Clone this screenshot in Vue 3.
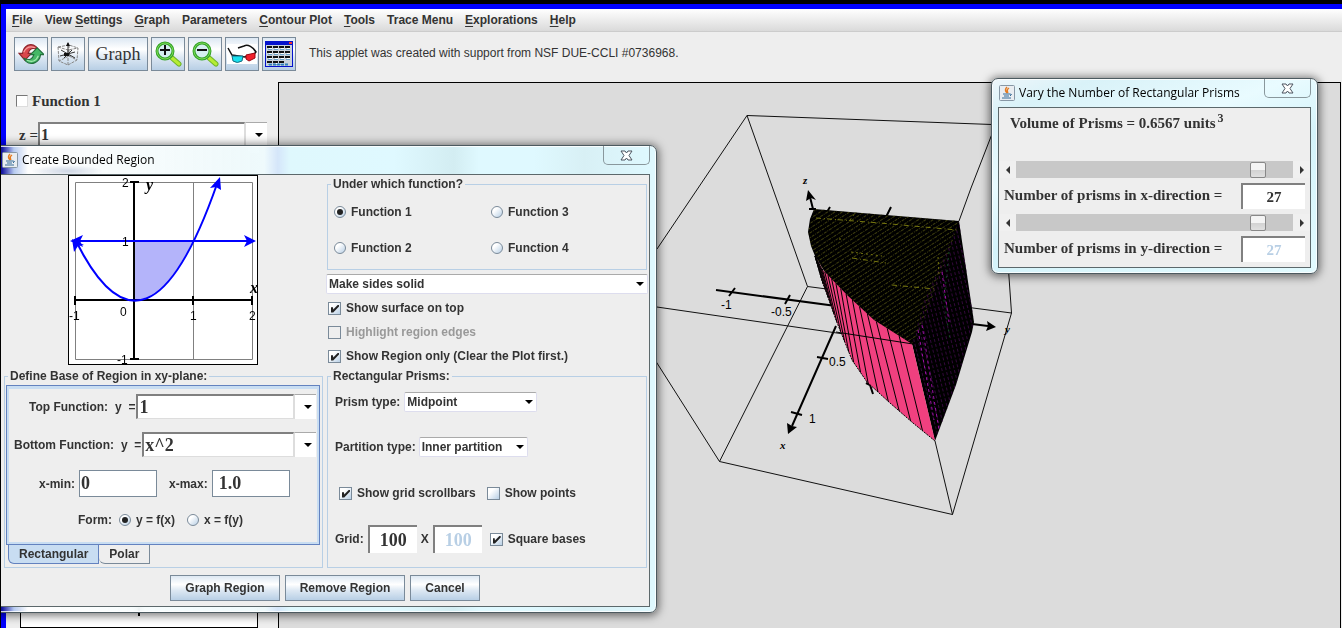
<script setup>
import { ref } from 'vue'

const menus = [
  ['', 'F', 'ile'], ['View ', 'S', 'ettings'], ['', 'G', 'raph'], ['Parameters', '', ''],
  ['', 'C', 'ontour Plot'], ['', 'T', 'ools'], ['Trace Menu', '', ''], ['', 'E', 'xplorations'], ['', 'H', 'elp'],
]

const under = ref('Function 1')
const form = ref('yx')
const nx = ref(27)
const ny = ref(27)

// Point at fraction f of a polyline's length
function along(points, f) {
  const lens = points.slice(1).map((p, i) => Math.hypot(p[0] - points[i][0], p[1] - points[i][1]))
  let d = f * lens.reduce((a, b) => a + b, 0)
  for (let i = 0; i < lens.length; i++) {
    if (d <= lens[i]) {
      const t = d / lens[i]
      return [points[i][0] + t * (points[i + 1][0] - points[i][0]), points[i][1] + t * (points[i + 1][1] - points[i][1])]
    }
    d -= lens[i]
  }
  return points[points.length - 1]
}
const upper = [[815, 256], [823, 270], [847, 295], [874, 320], [912, 344]]
const lower = [[815, 256], [822, 281], [829, 300], [836, 320], [852, 360], [867, 382], [890, 403], [913, 423], [935, 441]]
const edges = Array.from({ length: 25 }, (_, k) => {
  const a = along(upper, Math.pow(k / 25, 3))
  const b = along(lower, Math.pow(k / 25, 1.8))
  return { x1: a[0], y1: a[1], x2: b[0], y2: b[1] }
})
const face = [...upper, ...lower.slice().reverse()].map((p) => p.join(',')).join(' ')

const box = [
  'M992 124.500L747 115.500L657 249', 'M747 115.500L807.500 286.500L1011.500 313L1008.500 270', 'M807.500 286.500L719.500 461.500L952.500 514.500L1011.500 313',
  'M719.500 461.500L650 352', 'M650 306L719 316L913 344', 'M935 441L952.500 514.500', 'M959 221L971 188L992 134',
]
const keys = []
for (let r = 0; r < 4; r++) for (let c = 0; c < (r === 3 ? 3 : 4); c++) keys.push([4 + c * 6, 6 + r * 5])
</script>

<template>
  <div class="app">
    <nav class="menubar">
      <button v-for="m in menus" :key="m.join('')" class="menu">{{ m[0] }}<u>{{ m[1] }}</u>{{ m[2] }}</button>
    </nav>

    <div class="toolbar">
      <button class="btn tool" aria-label="Reset">
        <svg width="26" height="26" viewBox="2 2 23 23">
          <path d="M3 13H6C7 6 13 3 18 7L20 10C15 7 12 9 11 13H14L8 19Z" fill="#d9464c" stroke="#8d262c" />
          <path d="M7 12C9 8 12 6 17 8" fill="none" stroke="#f6a0a0" stroke-width="1" />
          <path d="M25 14H22C21 21 14 24 9 20L7 17C12 20 15 18 16 14H13L19 8Z" fill="#45b866" stroke="#236f3d" />
          <path d="M20 15C18 20 14 21 10 19" fill="none" stroke="#a5e9ac" stroke-width="1" />
        </svg>
      </button>
      <button class="btn tool" aria-label="Axes box">
        <svg width="26" height="26" viewBox="0 0 26 26" fill="none" stroke="#888">
          <path d="M3 6L14 4L23 7L22 19L13 24L4 20ZM3 6L13 9L23 7M13 9V24M14 4V15L4 20M14 15L22 19" stroke-dasharray="3 1" />
          <path d="M13 2V15M6 9L20 17M5 15L20 11M9 17L17 9" stroke="#333" stroke-width="1" />
          <path d="M13 1L11 5H15ZM9 12H14V15H9Z" fill="#111" stroke="none" />
        </svg>
      </button>
      <button class="btn graph">Graph</button>
      <button v-for="sign in ['in', 'out']" :key="sign" class="btn tool" :aria-label="'Zoom ' + sign">
        <svg width="28" height="28" viewBox="0 0 28 28">
          <path d="M17 17L25 24" stroke="#6fb52b" stroke-width="5" stroke-linecap="round" />
          <path d="M18 18L25 24" stroke="#b5ec33" stroke-width="3" stroke-linecap="round" />
          <circle cx="11" cy="11" r="8" fill="#d5eff0" stroke="#35a32b" stroke-width="3" />
          <circle cx="11" cy="11" r="8" fill="none" stroke="#7bdb53" stroke-width="1" />
          <path :d="sign === 'in' ? 'M6 10H16M11 5V15' : 'M6 10H16'" stroke="#111" stroke-width="2" />
        </svg>
      </button>
      <button class="btn tool" aria-label="3D glasses">
        <svg width="30" height="20" viewBox="0 0 30 20">
          <path d="M0 0H30V20H0Z" fill="#fff" />
          <path d="M1 4L5 11L18 13L27 10L29 8C26 3 21 0 17 2L11 4" fill="none" stroke="#111" stroke-width="1.500" />
          <path d="M5 12L16 12L15 17Q10 20 6 17Z" fill="#19e1ee" stroke="#176b80" />
          <path d="M19 11L28 9V14L22 17L19 15Z" fill="#f2202c" stroke="#9b0711" />
        </svg>
      </button>
      <button class="btn tool" aria-label="Keypad">
        <svg width="28" height="26" viewBox="0 0 28 26">
          <path d="M0 0H28V26H0Z" fill="#0512cc" />
          <path d="M1 4H27V25H1Z" fill="#c9d2da" />
          <path d="M24 1H27V3H24Z" fill="#e33" />
          <g v-for="k in keys" :key="k.join()">
            <rect :x="k[0] - 2" :y="k[1] - 1" width="5" height="2" fill="#111" />
            <rect :x="k[0]" :y="k[1] + 1" width="3" height="1" fill="#fff" />
            <rect :x="k[0] - 1" :y="k[1] + 2" width="4" height="1" fill="#6ca2c8" />
          </g>
          <path d="M4 23.500H24" stroke="#2f80b8" stroke-width="2" stroke-dasharray="3 1" />
        </svg>
      </button>
      <span class="credit">This applet was created with support from NSF DUE-CCLI #0736968.</span>
    </div>

    <main class="work">
      <aside class="side">
        <label class="fn"><input type="checkbox" class="flat" />Function 1</label>
        <div class="combo-row zrow">
          <label for="z1">z =</label>
          <div class="combo"><input id="z1" class="zfield" value="1" /><button class="drop" aria-label="Choices for z"></button></div>
        </div>
        <div class="mini"><i></i></div>
      </aside>
      <section class="canvas">
        <svg class="scene" width="100%" height="100%">
          <defs>
            <pattern id="weave" width="6" height="4" patternUnits="userSpaceOnUse" patternTransform="rotate(-33)">
              <path d="M0 0.500H3M4 0.500H5" stroke="#40400f" />
            </pattern>
            <pattern id="violet" width="4" height="5" patternUnits="userSpaceOnUse" patternTransform="rotate(-14)">
              <path d="M0.500 0V3" stroke="#32083a" />
            </pattern>
          </defs>
          <g transform="translate(-279 -83)">
            <path v-for="d in box" :key="d" :d="d" fill="none" stroke="#111" />
            <g stroke="#000" stroke-width="2">
              <path d="M716 290L836 306M836 326L792 426M813 209L810 197M972 324L988 326" fill="none" />
              <path d="M729 296L735 288M785 304L790 295M817 357L828 359M791 412L802 415M886 217L891 207M809 209H816M827 212L830 207M866 383L870 385L873 394" fill="none" />
            </g>
            <path d="M788 434L787 423L792 426L797 427ZM808 190L816 200L811 198L806 201ZM996 327L986 331L988 326L987 321Z" />
            <path d="M814 209L886 215L959 221L974 322L972 332L956 385L935 441L912 344L860 330L815 256L811 246L808 232L810 219Z" fill="#000" />
            <path d="M814 209L886 215L959 221L949 252L924 320L912 344L874 320L847 295L823 270L811 246L808 232Z" fill="url(#weave)" />
            <path d="M959 221L974 322L956 385L935 441L912 344L924 300Z" fill="url(#violet)" />
            <polygon :points="face" fill="#f0407f" />
            <line v-for="(e, i) in edges" :key="i" v-bind="e" stroke="#000" />
            <path d="M815 256L822 281L829 300L836 320L852 360L867 382L890 403L913 423L935 441" fill="none" stroke="#000" stroke-dasharray="2 1" />
            <path d="M836 332L913 344" stroke="#000" />
            <g fill="none" stroke="#77770f">
              <path d="M816 218L880 223L957 230M852 258L886 263M892 285L935 289" stroke-dasharray="5 3 1 2" />
              <path d="M851 252L882 256M839 239L842 239M938 257L939 274M850 220L855 213" stroke-dasharray="2 3" />
            </g>
            <path d="M942 272L949 322M922 325L939 430M918 330L934 420" fill="none" stroke="#a010a8" stroke-dasharray="3 3" />
            <path d="M949 252L944 300L950 340" fill="none" stroke="#124f22" stroke-dasharray="2 4" />
            <g class="tick">
              <text x="721" y="309">-1</text><text x="771" y="316">-0.5</text><text x="829" y="366">0.5</text><text x="809" y="423">1</text>
            </g>
            <g class="axis-small"><text x="803" y="184">z</text><text x="780" y="449">x</text><text x="1005" y="333">y</text></g>
          </g>
        </svg>
      </section>
    </main>

    <section class="window region" role="dialog" aria-label="Create Bounded Region">
      <header class="title">
        <svg class="java" viewBox="0 0 16 16"><rect x=".5" y=".5" width="15" height="15" rx="1" fill="#e9edf1" stroke="#8797a5" /><path d="M8 2Q5 5 8 8M10 3Q7 5 9 8" fill="none" stroke="#e57b20" stroke-width="1.500" /><path d="M4 9H11M5 11H10M3 13H12M11 9Q14 9 11 11" fill="none" stroke="#356b96" /></svg>
        <h2>Create Bounded Region</h2>
        <button class="close" aria-label="Close"><svg width="13" height="11" viewBox="0 0 13 11"><path d="M1 1H5L6.500 3L8 1H12L9 5.500L12 10H8L6.500 8L5 10H1L4 5.500Z" fill="#fff" stroke="#4d5560" /></svg></button>
      </header>
      <div class="pane">
        <div class="cols">
          <div class="left">
            <svg class="plot" width="190" height="190" viewBox="0 0 190 190">
              <rect x="0.500" y="0.500" width="189" height="189" fill="#fff" stroke="#000" />
              <path d="M7.500 7.500H184.500V184.500H7.500ZM125.500 7V184" fill="none" stroke="#808080" />
              <path d="M66 66V125Q96 125 125 66Z" fill="#b4b4fa" />
              <path d="M66 7V184M7 125H184" stroke="#000" stroke-width="2" />
              <path d="M62 7H71M62 184H71M7 121V130M125 121V130M184 121V130M59 66H66" stroke="#000" stroke-width="2" />
              <path d="M8 66H180M8 66Q79 209 149 9" fill="none" stroke="#00f" stroke-width="2" />
              <path d="M188 66L176 60L179 66L176 72ZM2 66L15 60L12 66L15 72ZM152 2L142 13L148 12L153 15ZM4 64L16 70L10 71L6 77Z" fill="#00f" />
              <g class="tick">
                <text x="54" y="12">2</text><text x="54" y="71">1</text><text x="52" y="141">0</text><text x="1" y="145">-1</text>
                <text x="122" y="145">1</text><text x="181" y="145">2</text><text x="49" y="189">-1</text>
              </g>
              <g class="axis"><text x="78" y="15">y</text><text x="182" y="118">x</text></g>
            </svg>
            <fieldset class="group base">
              <legend>Define Base of Region in xy-plane:</legend>
              <div class="tabpane">
                <div class="combo-row top"><label for="ft">Top Function:</label><span>y&nbsp; =</span><div class="combo"><input id="ft" value="1" /><button class="drop" aria-label="Top functions"></button></div></div>
                <div class="combo-row bottom"><label for="fb">Bottom Function:</label><span>y&nbsp; =</span><div class="combo"><input id="fb" value="x^2" /><button class="drop" aria-label="Bottom functions"></button></div></div>
                <div class="limits"><label for="xmin">x-min:</label><input id="xmin" value="0" /><label for="xmax" class="second">x-max:</label><input id="xmax" class="indent" value="1.0" /></div>
                <div class="form"><span>Form:</span><label><input v-model="form" type="radio" name="form" value="yx" />y = f(x)</label><label><input v-model="form" type="radio" name="form" value="xy" />x = f(y)</label></div>
              </div>
              <div class="tabs" role="tablist"><button class="tab on" role="tab" aria-selected="true">Rectangular</button><button class="tab" role="tab" aria-selected="false">Polar</button></div>
            </fieldset>
          </div>
          <div class="right">
            <fieldset class="group under">
              <legend>Under which function?</legend>
              <div class="choices">
                <label v-for="f in ['Function 1', 'Function 3', 'Function 2', 'Function 4']" :key="f"><input v-model="under" type="radio" name="under" :value="f" />{{ f }}</label>
              </div>
            </fieldset>
            <div class="pick wide"><select aria-label="Sides"><option>Make sides solid</option></select></div>
            <div class="checks">
              <label><input type="checkbox" checked />Show surface on top</label>
              <label class="off"><input type="checkbox" disabled />Highlight region edges</label>
              <label><input type="checkbox" checked />Show Region only (Clear the Plot first.)</label>
            </div>
            <fieldset class="group prisms">
              <legend>Rectangular Prisms:</legend>
              <div class="prow one"><label for="pt">Prism type:</label><div class="pick p1"><select id="pt"><option>Midpoint</option></select></div></div>
              <div class="prow two"><label for="pa">Partition type:</label><div class="pick p2"><select id="pa"><option>Inner partition</option></select></div></div>
              <div class="prow three"><label><input type="checkbox" checked />Show grid scrollbars</label><label><input type="checkbox" />Show points</label></div>
              <div class="prow four"><label for="g1">Grid:</label><input id="g1" class="num" value="100" /><span>X</span><input class="num" value="100" disabled aria-label="Grid second" /><label><input type="checkbox" checked />Square bases</label></div>
            </fieldset>
          </div>
        </div>
        <footer><button class="btn">Graph Region</button><button class="btn">Remove Region</button><button class="btn">Cancel</button></footer>
      </div>
    </section>

    <section class="window vary" role="dialog" aria-label="Vary the Number of Rectangular Prisms">
      <header class="title">
        <svg class="java" viewBox="0 0 16 16"><rect x=".5" y=".5" width="15" height="15" rx="1" fill="#e9edf1" stroke="#8797a5" /><path d="M8 2Q5 5 8 8M10 3Q7 5 9 8" fill="none" stroke="#e57b20" stroke-width="1.500" /><path d="M4 9H11M5 11H10M3 13H12M11 9Q14 9 11 11" fill="none" stroke="#356b96" /></svg>
        <h2>Vary the Number of Rectangular Prisms</h2>
        <button class="close" aria-label="Close"><svg width="13" height="11" viewBox="0 0 13 11"><path d="M1 1H5L6.500 3L8 1H12L9 5.500L12 10H8L6.500 8L5 10H1L4 5.500Z" fill="#fff" stroke="#4d5560" /></svg></button>
      </header>
      <div class="pane">
        <p class="volume">Volume of Prisms = 0.6567 units<sup>3</sup></p>
        <div class="scroll"><button class="arrow back" aria-label="Fewer x prisms"></button><input v-model="nx" type="range" min="1" max="30" aria-label="x prisms" /><button class="arrow" aria-label="More x prisms"></button></div>
        <div class="count"><label for="nx">Number of prisms in x-direction =</label><input id="nx" class="num" :value="nx" /></div>
        <div class="scroll"><button class="arrow back" aria-label="Fewer y prisms"></button><input v-model="ny" type="range" min="1" max="30" aria-label="y prisms" /><button class="arrow" aria-label="More y prisms"></button></div>
        <div class="count"><label for="ny">Number of prisms in y-direction =</label><input id="ny" class="num" :value="ny" disabled /></div>
      </div>
    </section>
  </div>
</template>

<style>
body { margin: 0; background: #000; }
</style>

<style scoped>
* { box-sizing: border-box; }
.app { position: relative; height: 100vh; overflow: hidden; display: flex; flex-direction: column; border-top: 4px solid #000; border-left: 1px solid #000; background: #eee; color: #333; font: bold 12px/16px "Liberation Sans", Arial, sans-serif; white-space: nowrap; box-shadow: inset 5px 5px 0 #00f; padding: 5px 0 0 5px; }
button, input, select { font: inherit; color: inherit; margin: 0; padding: 0; border: 0; border-radius: 0; background: none; outline: none; }
.menubar { display: flex; gap: 12px; flex: none; height: 23px; padding-left: 6px; background: linear-gradient(#fff, #dadada); border-bottom: 1px solid #ccc; }
.menu u { text-underline-offset: 2px; }
.toolbar { display: flex; gap: 3px; flex: none; padding: 5px 8px 0; height: 50px; }
.btn { display: flex; align-items: center; justify-content: center; border: 1px solid #7a8a99; background: linear-gradient(#dde8f3, #fff 35%, #dde8f3 60%, #b8cfe5); }
.tool { width: 34px; height: 34px; }
.graph { width: 60px; height: 34px; font: 18px/24px "Liberation Serif", "Times New Roman", serif; }
.credit { font-weight: normal; padding: 8px 0 0 10px; }
.work { display: flex; flex: 1; min-height: 0; }
.side { display: flex; flex-direction: column; width: 272px; flex: none; padding: 11px 11px 0 10px; font: bold 15px/16px "Liberation Serif", "Times New Roman", serif; }
.fn { display: flex; align-items: center; gap: 4px; height: 16px; }
.zrow { margin-top: 13px; padding-left: 3px; }
.mini { margin-top: auto; align-self: flex-start; width: 238px; height: 200px; flex: none; margin-left: 4px; border: 1px solid #000; background: #fff; padding-bottom: 11px; display: flex; justify-content: center; }
.mini i { width: 2px; background: #000; }
.canvas { flex: 1; min-width: 0; margin-right: 1px; border: 1px solid #000; border-bottom: 0; background: #dcdcdc; }
.scene { display: block; }
.plot { overflow: visible; }
.tick { font: 12px "Liberation Sans", Arial, sans-serif; fill: #000; }
.axis { font: italic bold 16px "Liberation Serif", serif; fill: #000; }
.axis-small { font: italic bold 11px "Liberation Serif", serif; fill: #000; }

input[type="checkbox"], input[type="radio"] { appearance: none; position: relative; flex: none; width: 13px; height: 13px; border: 1px solid #7a8a99; background: linear-gradient(135deg, #fff 30%, #b8cfe5); }
input[type="radio"] { width: 12px; height: 12px; border-radius: 50%; }
input[type="radio"]:checked::after { content: ""; position: absolute; inset: 2px; border-radius: 50%; background: #222; }
input[type="checkbox"]:checked::after { content: ""; position: absolute; inset: 2px 1px 1px 2px; background: #222; clip-path: polygon(0 35%, 25% 35%, 28% 62%, 90% 0, 100% 10%, 100% 25%, 28% 100%, 0 100%); }
input[type="checkbox"]:disabled { background: #eee; }
input[type="checkbox"].flat { width: 12px; height: 12px; background: #fff; border: 1px solid #777; border-right-color: #ddd; border-bottom-color: #ddd; }
.off { color: #999; }

.combo-row { display: flex; align-items: center; }
.combo { display: flex; flex: 1; min-width: 0; height: 25px; }
.combo input { flex: 1; min-width: 0; padding: 0 1px; background: #fff; border: 2px solid #808080; border-right: 1px solid #ddd; border-bottom: 1px solid #ddd; font: bold 18px/20px "Liberation Serif", "Times New Roman", serif; }
.combo .zfield { font-size: 16px; }
.drop { position: relative; width: 22px; background: #fff; border-top: 1px solid #aaa; border-left: 1px solid #ddd; }
.drop::after, .pick::after { content: ""; position: absolute; right: 4px; top: 50%; margin-top: -2px; border: 4px solid transparent; border-top-color: #000; border-bottom: 0; }
.pick { position: relative; height: 20px; }
.pick select { appearance: none; width: 100%; height: 20px; padding: 0 2px; background: #fff; border: 1px solid #dde; border-top-color: #aaa; border-radius: 2px; }

.window { position: absolute; border: 1px solid #4c5a60; border-radius: 7px; padding: 0 6px 5px; box-shadow: 0 1px 8px 2px rgba(0, 0, 0, .5), inset 0 0 0 1px rgba(255, 255, 255, .8); backdrop-filter: blur(3px); }
.region { left: -8px; top: 141px; width: 664px; background: radial-gradient(ellipse 36px 6px at 73px 25px, rgba(120, 140, 180, .35), transparent), linear-gradient(90deg, #1414a0 8px, #b7cbf0 20px, rgba(255, 255, 255, .85) 34px, rgba(238, 250, 252, .95) 270px, #d5e6fa 284px, #dff8fd 296px, #dff9ff 400px, #d3edf2 460px, #dff9ff 485px, #dff9ff 540px, #d8f0f5 590px, #dff9ff); }
.vary { left: 990px; top: 74px; width: 327px; background: linear-gradient(160deg, #eef6fa, #d9f2f8 12%, #e9fbff 35%, #d4f3fa 55%, #e2fbff); }
.title { display: flex; height: 28px; align-items: center; }
.region .title { padding-left: 2px; }
.vary .title { padding-left: 1px; }
.java { width: 16px; height: 16px; }
h2 { margin: 0 auto 0 4px; color: #000; font: 12px/16px "Open Sans", "Noto Sans", sans-serif; }
.close { display: flex; align-self: flex-start; align-items: center; justify-content: center; width: 47px; height: 19px; border: 1px solid #89979c; border-top: 0; border-radius: 0 0 5px 5px; }
.pane { border: 1px solid #5c686b; background: #eee; }
.cols { display: grid; grid-template-columns: 324px 1fr; }
.left { padding: 0 2px 0 3px; }
.plot { display: block; margin: 0 auto 3px 64px; }
.group { min-width: 0; margin: 0; padding: 0; border: 1px solid #b8cfe5; }
.group legend { height: 16px; margin-left: 3px; padding: 0 2px; }
.base { height: 200px; }
.tabpane { margin: 1px 2px 0 1px; height: 160px; border: 1px solid #6382bf; box-shadow: inset 0 3px 0 #c8ddf2, inset 0 0 0 2px #c8ddf2; padding: 8px 3px 0 7px; }
.top { padding-left: 15px; }
.top span, .bottom span { margin: 0 1px 0 7px; }
.bottom { margin-top: 13px; padding-left: 0; }
.limits { display: flex; align-items: center; margin: 13px 0 0 25px; }
.limits input { width: 78px; height: 27px; margin-left: 4px; padding: 0 1px; background: #fff; border: 1px solid #7a8a99; font: bold 18px/20px "Liberation Serif", serif; }
.limits .indent { padding-left: 6px; }
.limits .second { margin-left: 12px; }
.form { display: flex; gap: 12px; margin: 15px 0 0 64px; }
.form span { margin-right: -5px; }
.form label, .choices label, .checks label, .prow label { display: flex; align-items: center; gap: 5px; }
.tabs { display: flex; margin-left: 3px; }
.tab { height: 19px; padding: 0 10px; border: 1px solid #7a8a99; border-top: 0; border-left: 0; border-bottom-left-radius: 6px; }
.tab.on { background: #c8ddf2; border: 1px solid #6382bf; border-top: 0; }
.right { padding: 1px 1px 0; }
.under, .prisms { margin: 0 1px; }
.under { height: 94px; }
.choices { display: grid; grid-template-columns: 157px 1fr; row-gap: 20px; padding: 12px 0 0 6px; }
.choices label { height: 16px; }
.wide { margin-top: 4px; }
.checks { padding: 2px 0 0 2px; }
.checks label { height: 24px; }
.prisms { height: 200px; }
.prow { display: flex; align-items: center; padding-left: 7px; }
.one { margin-top: 8px; gap: 4px; }
.two { margin-top: 25px; gap: 3px; }
.p1 { width: 133px; }
.p2 { width: 109px; }
.three { padding-left: 11px; margin-top: 28px; gap: 11px; }
.four { margin-top: 24px; gap: 4px; }
.num { width: 49px; height: 28px; background: #fff; border-top: 2px solid #808080; border-left: 2px solid #808080; text-align: center; font: bold 18px/20px "Liberation Serif", "Times New Roman", serif; }
.num:disabled { color: #b8cfe5; }
.four label:last-child { margin-left: 4px; }
footer { display: flex; justify-content: center; gap: 5px; padding: 7px 0 5px; }
footer .btn { height: 26px; padding: 0 14px; }

.vary .pane { font: bold 15px/20px "Liberation Serif", "Times New Roman", serif; }
.volume { margin: 0; height: 53px; padding: 5px 0 0 11px; }
sup { font-size: 12px; line-height: 0; margin-left: 2px; }
.scroll { display: flex; height: 17px; }
.arrow { width: 17px; background: #f0f0f0; display: flex; align-items: center; justify-content: center; }
.arrow::after { content: ""; border: 4px solid transparent; border-left-color: #333; border-right: 0; }
.back::after { border: 4px solid transparent; border-right-color: #333; border-left: 0; }
.scroll input { appearance: none; flex: 1; min-width: 0; height: 17px; background: #c8c8c8; }
.scroll input::-webkit-slider-thumb { appearance: none; width: 16px; height: 16px; border: 1px solid #888; border-radius: 2px; background: linear-gradient(#f4f4f4 50%, #d2d2d2 50%, #e0e0e0); }
.count { display: flex; align-items: center; justify-content: space-between; height: 36px; padding: 0 5px; }
.count label { padding-bottom: 2px; }
.count .num { width: 64px; height: 26px; font-size: 15px; }
</style>
